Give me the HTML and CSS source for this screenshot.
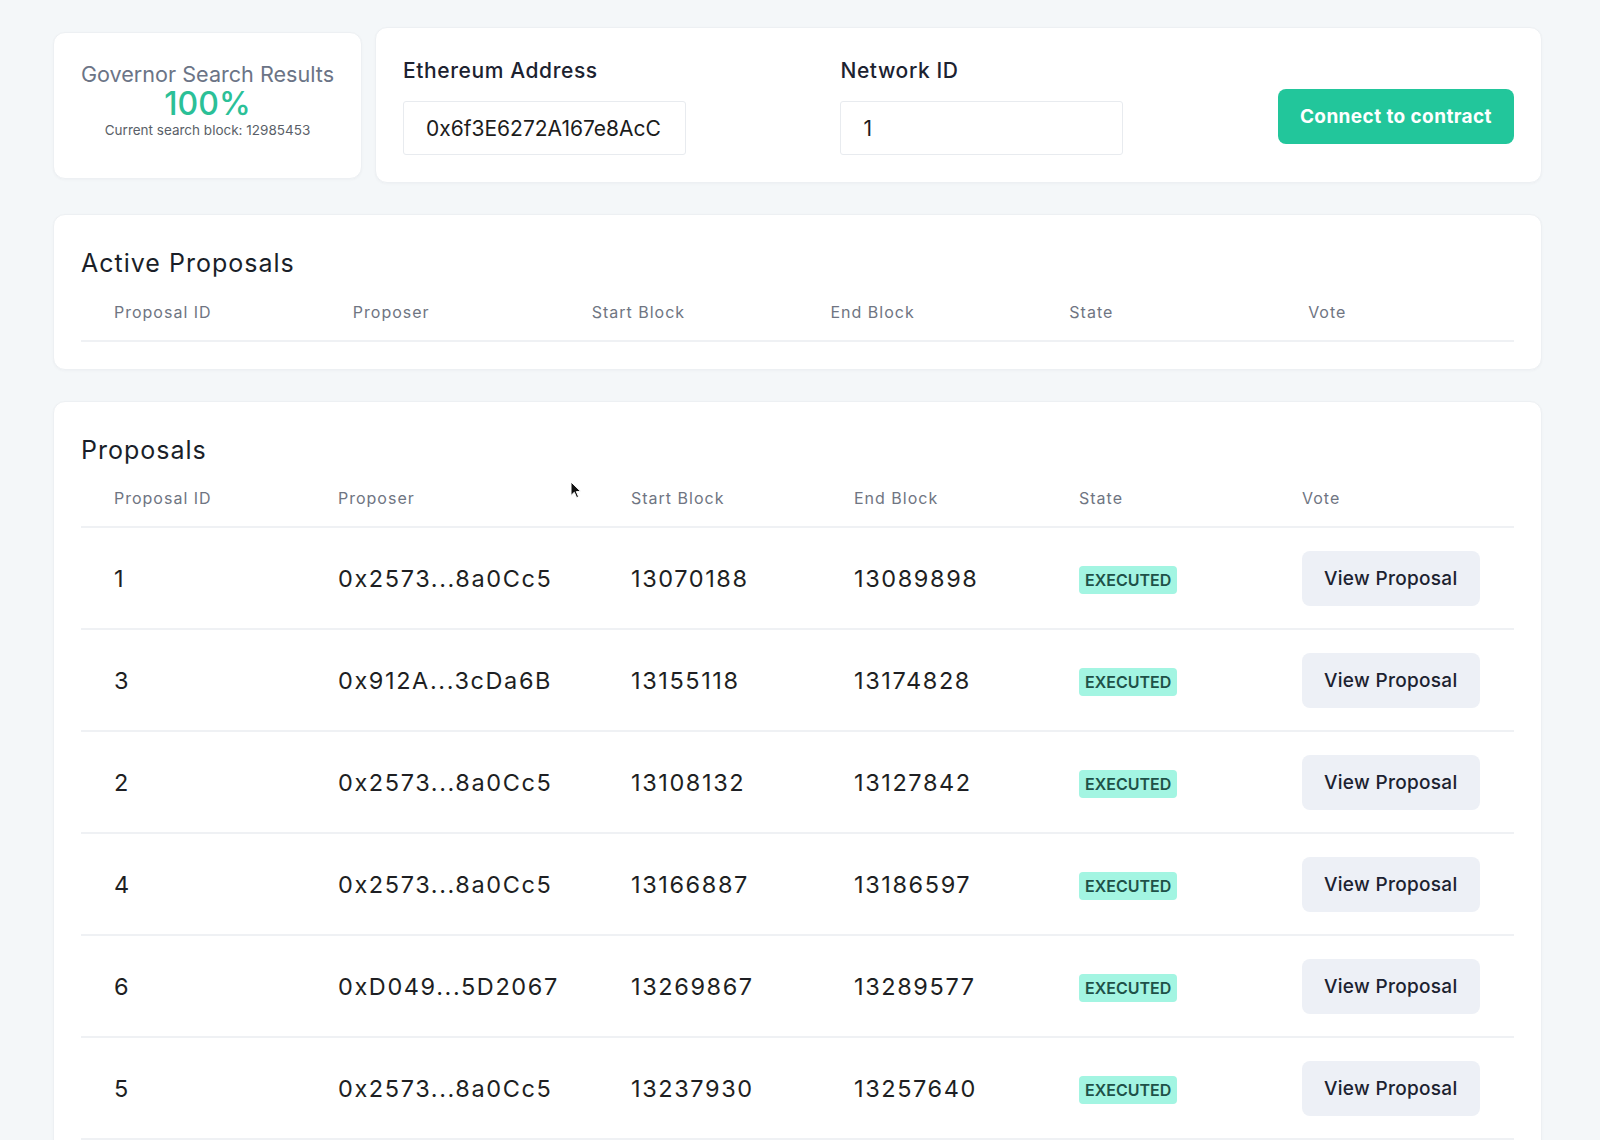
FILE: index.html
```html
<!DOCTYPE html>
<html lang="en">
<head>
<meta charset="utf-8">
<title>Governor</title>
<link rel="stylesheet" href="styles.css">
</head>
<body>
<div class="page">
  <div class="top">
    <div class="card status">
      <div class="status-title">Governor Search Results</div>
      <div class="status-pct">100%</div>
      <div class="status-block">Current search block: 12985453</div>
    </div>
    <div class="card connect">
      <div class="field">
        <label class="field-label">Ethereum Address</label>
        <input class="field-input" type="text" value="0x6f3E6272A167e8AcC" readonly>
      </div>
      <div class="field">
        <label class="field-label">Network ID</label>
        <input class="field-input" type="text" value="1" readonly>
      </div>
      <button class="btn-connect">Connect to contract</button>
    </div>
  </div>

  <div class="card section">
    <h2 class="section-title">Active Proposals</h2>
    <table class="tbl tbl-even">
      <thead>
        <tr><th>Proposal ID</th><th>Proposer</th><th>Start Block</th><th>End Block</th><th>State</th><th>Vote</th></tr>
      </thead>
    </table>
  </div>

  <div class="card section">
    <h2 class="section-title">Proposals</h2>
    <table class="tbl">
      <colgroup>
        <col class="c1"><col class="c2"><col class="c3"><col class="c4"><col class="c5"><col class="c6">
      </colgroup>
      <thead>
        <tr><th>Proposal ID</th><th>Proposer</th><th>Start Block</th><th>End Block</th><th>State</th><th>Vote</th></tr>
      </thead>
      <tbody>
        <tr><td>1</td><td>0x2573...8a0Cc5</td><td>13070188</td><td>13089898</td><td><span class="tag">EXECUTED</span></td><td><button class="btn-view">View Proposal</button></td></tr>
        <tr><td>3</td><td>0x912A...3cDa6B</td><td>13155118</td><td>13174828</td><td><span class="tag">EXECUTED</span></td><td><button class="btn-view">View Proposal</button></td></tr>
        <tr><td>2</td><td>0x2573...8a0Cc5</td><td>13108132</td><td>13127842</td><td><span class="tag">EXECUTED</span></td><td><button class="btn-view">View Proposal</button></td></tr>
        <tr><td>4</td><td>0x2573...8a0Cc5</td><td>13166887</td><td>13186597</td><td><span class="tag">EXECUTED</span></td><td><button class="btn-view">View Proposal</button></td></tr>
        <tr><td>6</td><td>0xD049...5D2067</td><td>13269867</td><td>13289577</td><td><span class="tag">EXECUTED</span></td><td><button class="btn-view">View Proposal</button></td></tr>
        <tr><td>5</td><td>0x2573...8a0Cc5</td><td>13237930</td><td>13257640</td><td><span class="tag">EXECUTED</span></td><td><button class="btn-view">View Proposal</button></td></tr>
      </tbody>
    </table>
  </div>
</div>
<svg class="cursor" width="12" height="18" viewBox="0 0 12 18"><path d="M1 1 L1 14.5 L4.3 11.3 L6.6 16.6 L8.6 15.8 L6.3 10.6 L10.8 10.6 Z" fill="#111" stroke="#fff" stroke-width="1"/></svg>
</body>
</html>
```
FILE: styles.css
```css
* { box-sizing: border-box; }

body {
  margin: 0;
  background: #f4f7f9;
  font-family: Inter, "Noto Sans", sans-serif;
  color: #1c2230;
  position: relative;
}

.page {
  padding: 27px 58px 0 53px;
  display: flex;
  flex-direction: column;
  gap: 31px;
}

.top {
  display: flex;
  align-items: center;
  gap: 13px;
}

.card {
  background: #fff;
  border: 1px solid #edf0f3;
  border-radius: 12px;
  box-shadow: 0 1px 3px rgba(30, 40, 60, 0.03);
}

.status {
  width: 309px;
  padding: 27px 10px 38px;
  text-align: center;
}

.status-title {
  font-size: 21.6px;
  line-height: 28px;
  color: #6b7486;
}

.status-pct {
  font-size: 32px;
  line-height: 32px;
  font-weight: 500;
  color: #2bc097;
}

.status-block {
  font-size: 13.5px;
  line-height: 20px;
  color: #5a5f68;
}

.connect {
  flex: 1;
  padding: 27px;
  display: flex;
  justify-content: space-between;
  align-items: flex-end;
}

.field {
  display: flex;
  flex-direction: column;
}

.field-label {
  font-size: 21px;
  line-height: 31px;
  font-weight: 500;
  letter-spacing: 0.6px;
  color: #1c2230;
  margin-bottom: 15px;
}

.field-input {
  width: 283px;
  height: 54px;
  border: 1px solid #e8ebef;
  border-radius: 3px;
  background: #fff;
  padding: 0 22px;
  font-family: inherit;
  font-size: 21px;
  color: #1c1c1c;
  outline: none;
}

.btn-connect {
  height: 55px;
  padding: 0 22px;
  margin-bottom: 11px;
  border: 0;
  border-radius: 8px;
  background: #22c69b;
  color: #fff;
  font-family: inherit;
  font-size: 19px;
  font-weight: 700;
  letter-spacing: 0.4px;
}

.section {
  padding: 30px 27px 27px;
}

.section-title {
  margin: 0;
  font-size: 25px;
  line-height: 37.5px;
  font-weight: 400;
  letter-spacing: 1px;
  color: #1a1f29;
}

.tbl {
  width: 100%;
  border-collapse: collapse;
  table-layout: fixed;
}

.tbl th {
  text-align: left;
  font-weight: 400;
  font-size: 16px;
  line-height: 24px;
  color: #6f7582;
  letter-spacing: 1px;
  padding: 17px 0 16px 33px;
  border-bottom: 2px solid #eff1f4;
}

.c1 { width: 224px; }
.c2 { width: 293px; }
.c3 { width: 223px; }
.c4 { width: 225px; }
.c5 { width: 223px; }

.tbl td {
  height: 102px;
  padding: 0 0 0 33px;
  vertical-align: middle;
  font-size: 23.5px;
  letter-spacing: 1.6px;
  color: #1e1f23;
  border-bottom: 2px solid #eff1f4;
  white-space: nowrap;
}

.tag {
  display: inline-flex;
  align-items: center;
  height: 28px;
  padding: 0 6px;
  border-radius: 4px;
  background: #a3f5e2;
  color: #1f5148;
  font-size: 16px;
  font-weight: 600;
  letter-spacing: 0;
}

.btn-view {
  height: 55px;
  padding: 0 22px;
  border: 0;
  border-radius: 8px;
  background: #edf0f6;
  color: #1c2230;
  font-family: inherit;
  font-size: 19px;
  font-weight: 500;
  letter-spacing: 0.3px;
}

.cursor {
  position: absolute;
  left: 570px;
  top: 481px;
}
```
